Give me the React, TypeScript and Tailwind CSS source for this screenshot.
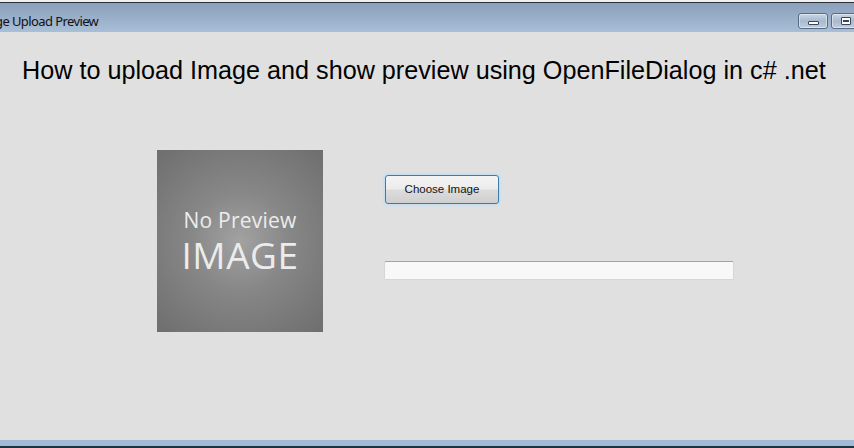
import React from "react";

const WinButton = ({ kind }: { kind: "min" | "max" }) => (
  <div className="w-[30px] h-[16px] rounded-[3px] border border-[#5a6a80] bg-gradient-to-b from-[#c9d6e6] via-[#a8b9cf] to-[#bfcde0] flex items-center justify-center shadow-[inset_0_0_0_1px_rgba(255,255,255,0.45)]">
    {kind === "min" ? (
      <div className="mt-[4px] w-[11px] h-[4px] bg-white border border-[#3a4658] rounded-[1px]" />
    ) : (
      <div className="w-[10px] h-[8px] bg-white border border-[#3a4658] rounded-[1px] flex items-center justify-center">
        <div className="w-[6px] h-[2px] bg-[#3a4658]" />
      </div>
    )}
  </div>
);

const App = () => {
  return (
    <div
      className="w-[854px] h-[448px] flex flex-col overflow-hidden bg-[#e0e0e0]"
      style={{ fontFamily: '"Liberation Sans", Arial, sans-serif' }}
    >
      <div className="h-[2px] bg-[#eef0f2]" />
      <div className="h-[1px] bg-[#2b2f35]" />

      {/* title bar */}
      <div className="h-[29px] flex items-start overflow-hidden bg-gradient-to-b from-[#8aa0bb] to-[#a9bed7]">
        <span
          className="-ml-[27px] mt-[10px] text-[13px] leading-[16px] tracking-[-0.6px] text-[#111] whitespace-nowrap"
          style={{ fontFamily: '"Noto Sans", "Open Sans", sans-serif' }}
        >
          Image Upload Preview
        </span>
        <div className="ml-auto mt-[10px] -mr-[7px] flex gap-[3px]">
          <WinButton kind="min" />
          <WinButton kind="max" />
        </div>
      </div>

      {/* client area */}
      <div className="flex-1 flex flex-col">
        <h1 className="mt-[24px] ml-[22px] text-[25.2px] leading-[28px] text-black whitespace-nowrap font-normal">
          How to upload Image and show preview using OpenFileDialog in c# .net
        </h1>

        <div className="mt-[66px] flex items-start">
          <div
            className="ml-[157px] w-[166px] h-[182px] flex flex-col items-center justify-center bg-[radial-gradient(circle_at_50%_50%,#a2a2a2_0%,#878787_40%,#6e6e6e_100%)] text-[#ececec]"
            style={{ fontFamily: '"Open Sans", "Noto Sans", sans-serif' }}
          >
            <div className="mt-[2px] text-[21px] leading-[26px] tracking-[0.2px]">No Preview</div>
            <div className="text-[37px] leading-[44px] tracking-[0.5px]">IMAGE</div>
          </div>

          <div className="ml-[61px] mt-[25px] flex flex-col">
            <button
              className="ml-[1px] w-[114px] h-[29px] rounded-[3px] border border-[#3d7bad] bg-[linear-gradient(to_bottom,#f4f4f4_0%,#ececec_48%,#dcdcdc_52%,#cfcfcf_100%)] shadow-[0_0_3px_1px_#b5def7] text-[11.5px] text-[#111]"
              style={{ fontFamily: '"Liberation Sans", Arial, sans-serif' }}
            >
              Choose Image
            </button>
            <div className="mt-[57px] w-[350px] h-[19px] rounded-[2px] bg-[#f8f8f8] border border-[#d6d6d6] border-t-[#a3a3a3]" />
          </div>
        </div>
      </div>

      {/* bottom frame */}
      <div className="h-[6px] bg-[#a2bad6]" />
      <div className="h-[2px] bg-[#1d3340]" />
    </div>
  );
};

export default App;
